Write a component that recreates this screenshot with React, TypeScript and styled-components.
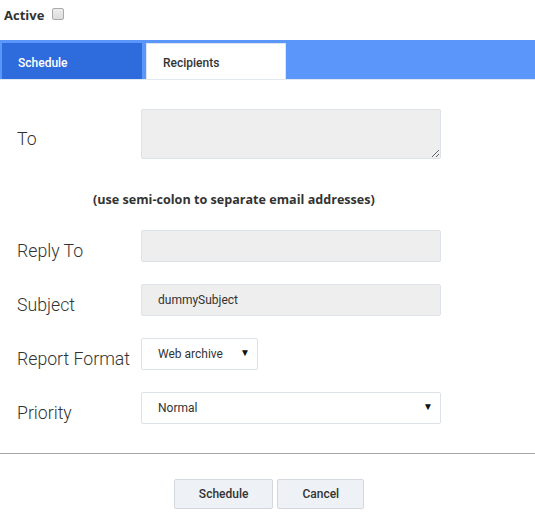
import React, { useState } from "react";
import styled, { createGlobalStyle } from "styled-components";

const GlobalStyle = createGlobalStyle`
	body {
		margin: 0;
		background: #ffffff;
		font-family: "Roboto", "Liberation Sans", sans-serif;
		color: #333333;
	}
`;

const Page = styled.div`
	width: 535px;
	height: 516px;
	display: flex;
	flex-direction: column;
	overflow: hidden;
`;

const ActiveRow = styled.label`
	display: flex;
	align-items: center;
	gap: 8px;
	height: 30px;
	padding: 0 0 0 4px;
	font-family: "Open Sans", "Liberation Sans", sans-serif;
	font-weight: 700;
	font-size: 13px;
	color: #333;
	margin-bottom: 10px;
`;

const CheckBox = styled.input`
	appearance: none;
	margin: 0;
	width: 12px;
	height: 12px;
	border: 1px solid #a9a9a9;
	border-radius: 2px;
	background: linear-gradient(#ededed, #dcdcdc);
	position: relative;
	top: -1px;
`;

const TabBar = styled.div`
	display: flex;
	align-items: flex-end;
	gap: 4px;
	height: 40px;
	padding: 0 0 0 2px;
	box-sizing: border-box;
	background: #5b96fa;
	border-bottom: 1px solid #e2e8f0;
`;

const Tab = styled.div<{ $active?: boolean }>`
	width: 140px;
	height: 36px;
	box-sizing: border-box;
	display: flex;
	align-items: center;
	padding: 3px 0 0 16px;
	font-size: 12px;
	font-weight: 500;
	background: ${p => (p.$active ? "#2e6bdc" : "#ffffff")};
	color: ${p => (p.$active ? "#ffffff" : "#333333")};
	border: ${p => (p.$active ? "none" : "1px solid #dfe5ee")};
	border-bottom: none;
`;

const Form = styled.div`
	display: flex;
	flex-direction: column;
	padding: 29px 0 0 17px;
`;

const Row = styled.div<{ $gap?: number }>`
	display: grid;
	grid-template-columns: 124px auto;
	align-items: center;
	margin-bottom: ${p => p.$gap ?? 22}px;
`;

const Label = styled.div`
	font-size: 17.7px;
	line-height: 21px;
	font-weight: 300;
	color: #333;
	padding-top: 10px;
`;

const Field = styled.input`
	width: 300px;
	height: 32px;
	box-sizing: border-box;
	background: #eeeeee;
	border: 1px solid #dde2e8;
	border-radius: 2px;
	padding: 0 16px;
	font-family: "Roboto", "Liberation Sans", sans-serif;
	font-size: 12px;
	color: #333;
	outline: none;
`;

const Area = styled.textarea`
	width: 300px;
	height: 50px;
	box-sizing: border-box;
	background: #eeeeee;
	border: 1px solid #dde2e8;
	border-radius: 2px;
	margin: 0;
	display: block;
	outline: none;
`;

const Hint = styled.div`
	font-family: "Open Sans", "Liberation Sans", sans-serif;
	font-weight: 700;
	font-size: 12.6px;
	line-height: 17px;
	color: #333;
	padding-left: 76px;
	margin: 32px 0 22px;
`;

const SelectBox = styled.div<{ $width: number }>`
	width: ${p => p.$width}px;
	height: 32px;
	box-sizing: border-box;
	display: flex;
	align-items: center;
	justify-content: space-between;
	padding: 0 7px 0 16px;
	background: #ffffff;
	border: 1px solid #dde2e8;
	border-radius: 2px;
	font-size: 12px;
	color: #333;
`;

const Arrow = styled.span`
	font-size: 10px;
	color: #111;
	margin-top: -3px;
`;

const Divider = styled.hr`
	border: none;
	border-top: 1px solid #a4a8ad;
	margin: 7px 0 0;
`;

const Buttons = styled.div`
	display: flex;
	justify-content: center;
	gap: 4px;
	padding: 25px 0 0 3px;
`;

const Button = styled.button`
	height: 30px;
	padding: 0 24px;
	background: #eef1f6;
	border: 1px solid #d3d8df;
	border-radius: 2px;
	font-family: "Roboto", "Liberation Sans", sans-serif;
	font-size: 12px;
	font-weight: 500;
	color: #333;
`;

export default function App() {
	const [active, setActive] = useState(false);
	return (
		<>
			<GlobalStyle />
			<Page>
				<ActiveRow>
					Active
					<CheckBox type="checkbox" checked={active} onChange={() => setActive(!active)} />
				</ActiveRow>
				<TabBar>
					<Tab $active>Schedule</Tab>
					<Tab>Recipients</Tab>
				</TabBar>
				<Form>
					<Row $gap={0}>
						<Label>To</Label>
						<Area />
					</Row>
					<Hint>(use semi-colon to separate email addresses)</Hint>
					<Row>
						<Label>Reply To</Label>
						<Field />
					</Row>
					<Row>
						<Label>Subject</Label>
						<Field defaultValue="dummySubject" />
					</Row>
					<Row>
						<Label>Report Format</Label>
						<SelectBox $width={117}>
							Web archive<Arrow>▼</Arrow>
						</SelectBox>
					</Row>
					<Row $gap={22}>
						<Label>Priority</Label>
						<SelectBox $width={300}>
							Normal<Arrow>▼</Arrow>
						</SelectBox>
					</Row>
				</Form>
				<Divider />
				<Buttons>
					<Button>Schedule</Button>
					<Button>Cancel</Button>
				</Buttons>
			</Page>
		</>
	);
}
